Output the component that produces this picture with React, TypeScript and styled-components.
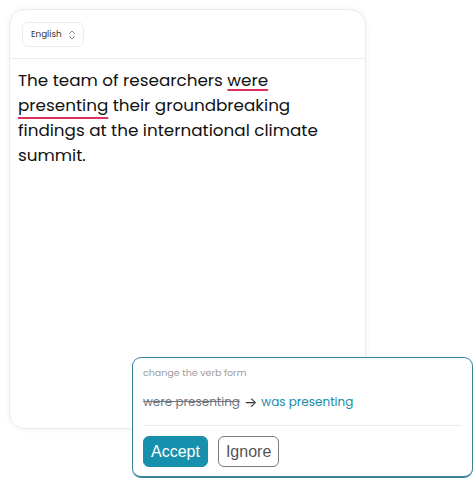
import React from "react";
import styled, { createGlobalStyle } from "styled-components";

const Global = createGlobalStyle`
  html, body { margin: 0; padding: 0; background: #ffffff; }
  body { font-family: "Poppins", "Inter", "Noto Sans", sans-serif; }
  * { box-sizing: border-box; }
`;

const Stage = styled.div`
  position: relative;
  width: 474px;
  height: 479px;
  overflow: hidden;
  padding: 9px;
`;

const Card = styled.div`
  width: 357px;
  height: 420px;
  border-radius: 16px;
  background: #fff;
  border: 1px solid #ececec;
  box-shadow: 0 0 6px rgba(0, 0, 0, 0.06);
  display: flex;
  flex-direction: column;
  overflow: hidden;
`;

const Header = styled.div`
  height: 49px;
  border-bottom: 1px solid #ececec;
  display: flex;
  align-items: center;
  padding-left: 12px;
`;

const Select = styled.div`
  height: 25px;
  width: 62px;
  border: 1px solid #ececec;
  border-radius: 6px;
  display: flex;
  align-items: center;
  gap: 6px;
  padding-left: 8px;
  font-size: 8.8px;
  color: #333;
  margin-top: 1px;
`;

const Body = styled.div`
  padding: 9px 9px 0 8px;
  font-size: 16.8px;
  line-height: 25px;
  color: #111;
`;

const Flag = styled.span<{ $offset: number }>`
  text-decoration-line: underline;
  text-decoration-style: solid;
  text-decoration-color: #e0305f;
  text-decoration-thickness: 1.5px;
  text-decoration-skip-ink: none;
  text-underline-offset: ${(p) => p.$offset}px;
`;

const Popup = styled.div`
  position: absolute;
  left: 132px;
  top: 357px;
  width: 341px;
  height: 121px;
  background: #fff;
  border: 1.5px solid #3a8499;
  border-bottom-width: 2.5px;
  border-radius: 9px;
  padding: 8px 10px 0 10px;
  display: flex;
  flex-direction: column;
`;

const Hint = styled.div`
  font-size: 9.5px;
  color: #9c9c9c;
  line-height: 14px;
`;

const Change = styled.div`
  margin-top: 14px;
  font-size: 12px;
  line-height: 16px;
  display: flex;
  align-items: center;
  gap: 4px;
  padding-bottom: 15px;
  border-bottom: 1px solid #ececec;
`;

const Old = styled.span`
  color: #6f7780;
  text-decoration: line-through;
  text-decoration-color: #6f7780;
`;

const Arrow = styled.span`
  color: #333;
  font-size: 14px;
  line-height: 16px;
`;

const New = styled.span`
  color: #1a8aa6;
`;

const Actions = styled.div`
  margin-top: 10px;
  display: flex;
  gap: 10px;
`;

const Button = styled.button<{ $primary?: boolean }>`
  height: 31px;
  padding: 0 7px;
  border-radius: 6px;
  font-family: "Liberation Sans", Arial, sans-serif;
  font-size: 16px;
  cursor: pointer;
  border: 1px solid ${(p) => (p.$primary ? "#1690ad" : "#7a7a7a")};
  background: ${(p) => (p.$primary ? "#1690ad" : "#fff")};
  color: ${(p) => (p.$primary ? "#fff" : "#555")};
`;

const Chevrons = () => (
  <svg width="8" height="10" viewBox="0 0 8 10" fill="none" stroke="#888" strokeWidth="1" strokeLinecap="round" strokeLinejoin="round">
    <path d="M1.5 3.5 L4 1 L6.5 3.5" />
    <path d="M1.5 6.5 L4 9 L6.5 6.5" />
  </svg>
);

export default function App() {
  return (
    <>
      <Global />
      <Stage>
        <Card>
          <Header>
            <Select>
              English <Chevrons />
            </Select>
          </Header>
          <Body>
            The team of researchers <Flag $offset={3}>were</Flag>{" "}
            <Flag $offset={6}>presenting</Flag> their groundbreaking findings at the international climate summit.
          </Body>
        </Card>
        <Popup>
          <Hint>change the verb form</Hint>
          <Change>
            <Old>were presenting</Old>
            <Arrow>→</Arrow>
            <New>was presenting</New>
          </Change>
          <Actions>
            <Button $primary>Accept</Button>
            <Button>Ignore</Button>
          </Actions>
        </Popup>
      </Stage>
    </>
  );
}
